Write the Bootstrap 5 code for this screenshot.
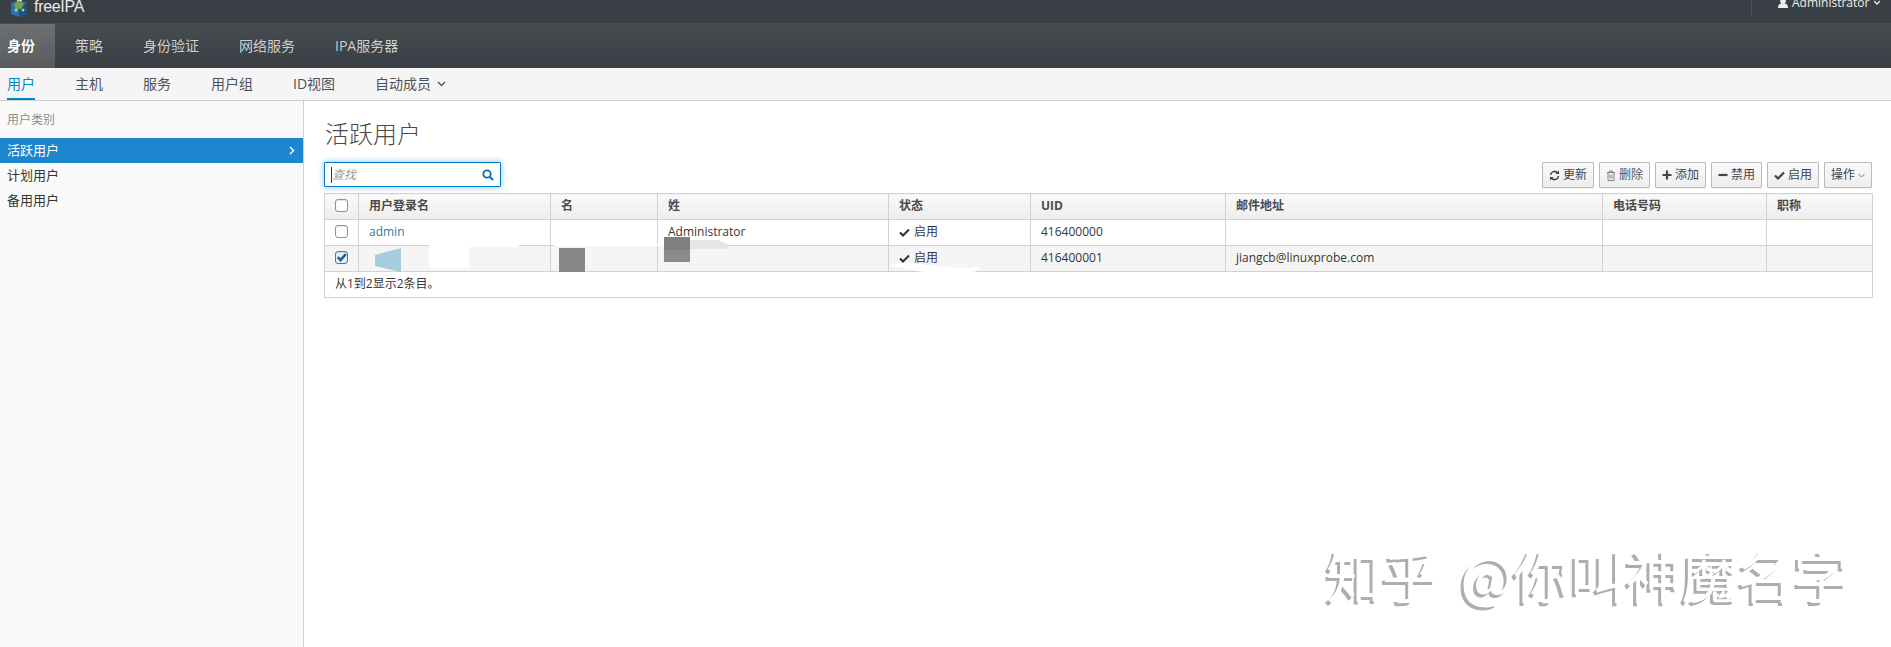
<!DOCTYPE html>
<html lang="zh-CN">
<head>
<meta charset="utf-8">
<title>freeIPA</title>
<link href="https://cdn.jsdelivr.net/npm/bootstrap@5.3.0/dist/css/bootstrap.min.css" rel="stylesheet">
<style>
html,body{height:647px;overflow:hidden}
body{font-family:"Open Sans","Noto Sans CJK SC",sans-serif;font-size:12px;color:#363636;background:#fff}
.top-strip{height:24px;background:#393f45;color:#f1f1f1;overflow:hidden;border-bottom:1px solid #474c50}
.brand-box{margin-top:-5px;padding-left:10px;gap:6px;height:24px}
.brand-text{font-family:"Liberation Sans",sans-serif;font-size:16px;letter-spacing:-.3px;color:#e8e8e8;line-height:22px}
.user-box{margin-top:-9px;height:24px;width:140px;border-left:1px solid #4d5258;padding-left:26px;gap:4px;font-size:12px;color:#eee;line-height:20px}
.primary-strip{height:44px;background:linear-gradient(#474c50,#393f45);gap:40px;padding-right:20px}
.primary-strip a{color:#d1d1d1;font-size:14px;line-height:44px;text-decoration:none;text-shadow:0 0 1px #0004}
.primary-strip a:first-child{background:linear-gradient(#6d7072,#585c5f);color:#fff;font-weight:700;width:55px;padding-left:7px;margin-right:-20px;display:block}
.tab-strip{height:33px;background:#f5f5f5;border-bottom:1px solid #d1d1d1;gap:40px;padding-left:7px}
.tab-strip a{color:#4d5258;font-size:14px;height:32px;text-decoration:none;display:flex;align-items:center;gap:6px;padding-top:1px;border-bottom:2px solid transparent}
.tab-strip a.on{color:#0088ce;border-bottom-color:#0088ce}
.main-row{height:547px}
.side-col{width:304px;flex:none;background:#fafafa;border-right:1px solid #d1d1d1;padding-top:10px}
.side-title{color:#8b8d8f;font-size:12px;line-height:17px;padding-left:7px;margin-bottom:10px}
.side-link{display:flex;justify-content:space-between;align-items:center;height:25px;padding:0 8px 0 7px;color:#363636;font-size:13px;text-decoration:none}
.side-link.on{background:#1c86cf;color:#fff}
.content-col{flex:1;padding:0 19px 0 20px;min-width:0}
.page-title{font-size:24px;font-weight:300;line-height:32px;margin:17px 0 12px 1px;color:#4a4a4a}
.tool-row{height:26px;margin-bottom:5px}
.search-box{width:177px;height:25px;border:1px solid #0079c6;box-shadow:0 0 6px #7cc3ee;background:#fff;padding:0 6px;border-radius:1px}
.search-hint{font-style:italic;color:#9c9c9c;font-size:12px;border-left:1px solid #333;line-height:16px}
.act-btn{height:26px;padding:0 6px;display:flex;align-items:center;gap:3px;font-size:12px;color:#3f4448;background:linear-gradient(#fafafa,#ededed);border:1px solid #bbb;border-radius:1px;box-shadow:0 1px 1px #0000000d;white-space:nowrap;--bs-btn-font-size:12px}
.act-btn.dim{color:#55595d}
.btn-row{gap:5px}
.grid-wrap{position:relative}
.ipa-grid{table-layout:fixed;width:1548px;border-collapse:collapse;margin:0;color:#363636}
.ipa-grid th,.ipa-grid td{height:26px;padding:0 10px;border:1px solid #d1d1d1;font-size:12px;line-height:16px;vertical-align:middle;white-space:nowrap;overflow:hidden}
.ipa-grid td{padding-bottom:2px}
.ipa-grid th{background:linear-gradient(#fafafa,#ededed);font-weight:700;color:#4a4a4a;font-size:12px;padding-bottom:2px}
.ipa-grid .shade td{background:#f5f5f5}
.ipa-grid a{color:#2a7ea8;text-decoration:none}
.ipa-grid .tick{padding-left:10px}
.ipa-grid .form-check-input{width:13px;height:13px;margin:0;display:block;border:1px solid #8f9396;border-radius:3px;background-color:#fff;box-shadow:inset 0 1px 1px #0000001a}
.ipa-grid .form-check-input:checked{border-color:#3d7ea6;background-color:#e3eff6;background-image:url("data:image/svg+xml,%3Csvg xmlns='http://www.w3.org/2000/svg' viewBox='0 0 13 13'%3E%3Cpath d='M2 6l3.500 3.500 6-7' fill='none' stroke='%23215f88' stroke-width='3'/%3E%3C/svg%3E")}
.cover{position:absolute;left:0;top:0;pointer-events:none}
.wm-text{position:absolute;left:1326px;top:534px;font-family:"Noto Sans CJK SC",sans-serif;font-size:56px;line-height:80px;white-space:nowrap;word-spacing:10px;color:#fff;text-shadow:-3px 3px 0 #aeaeae;pointer-events:none}
</style>
</head>
<body>
<div class="top-strip d-flex justify-content-between">
  <div class="brand-box d-flex align-items-center">
    <svg width="18" height="22" viewBox="0 0 18 22"><path d="M1 7l8-3 8 3v11l-8 3-8-3z" fill="#2f6fa8"/><path d="M9 10l8-3v11l-8 3z" fill="#1e4f86"/><path d="M4 9l5-6 5 5-3 5H6z" fill="#6fa64a"/><circle cx="6" cy="14" r="1.5" fill="#9ecbe8"/><circle cx="13" cy="14" r="1.5" fill="#b9d36a"/><rect x="7" y="1" width="5" height="4" fill="#cfd9c8"/></svg>
    <span class="brand-text">freeIPA</span>
  </div>
  <div class="user-box d-flex align-items-center">
    <svg width="10" height="10" viewBox="0 0 10 10"><circle cx="5" cy="3" r="2.800" fill="#eee"/><path d="M0 10c0-3.500 2-4.800 5-4.800S10 6.500 10 10z" fill="#eee"/></svg>
    <span>Administrator</span>
    <svg width="8" height="6" viewBox="0 0 8 6"><path d="M1 1l3 3 3-3" fill="none" stroke="#eee" stroke-width="1.300"/></svg>
  </div>
</div>
<nav class="primary-strip d-flex">
  <a href="#">身份</a><a href="#">策略</a><a href="#">身份验证</a><a href="#">网络服务</a><a href="#">IPA服务器</a>
</nav>
<nav class="tab-strip d-flex">
  <a href="#" class="on">用户</a><a href="#">主机</a><a href="#">服务</a><a href="#">用户组</a><a href="#">ID视图</a>
  <a href="#">自动成员 <svg width="9" height="6" viewBox="0 0 9 6"><path d="M1 1l3.500 3.500L8 1" fill="none" stroke="#4d5258" stroke-width="1.300"/></svg></a>
</nav>
<div class="main-row d-flex">
  <aside class="side-col">
    <div class="side-title">用户类别</div>
    <a href="#" class="side-link on">活跃用户 <svg width="6" height="9" viewBox="0 0 6 9"><path d="M1 1l3.500 3.500L1 8" fill="none" stroke="#fff" stroke-width="1.400"/></svg></a>
    <a href="#" class="side-link">计划用户</a>
    <a href="#" class="side-link">备用用户</a>
  </aside>
  <main class="content-col">
    <h1 class="page-title">活跃用户</h1>
    <div class="tool-row d-flex justify-content-between">
      <div class="search-box d-flex justify-content-between align-items-center">
        <span class="search-hint">查找</span>
        <svg width="12" height="12" viewBox="0 0 12 12"><circle cx="5" cy="5" r="3.700" fill="none" stroke="#0d6fa8" stroke-width="1.800"/><path d="M7.800 7.800L11 11" stroke="#0d6fa8" stroke-width="2"/></svg>
      </div>
      <div class="d-flex btn-row">
        <button class="btn act-btn"><svg width="11" height="11" viewBox="0 0 11 11"><path d="M1.500 5A4 4 0 0 1 8.500 2.800M9.500 6A4 4 0 0 1 2.500 8.200" fill="none" stroke="#3f4448" stroke-width="1.500"/><path d="M10 .5v3.500H6.500zM1 10.500V7h3.500z" fill="#3f4448"/></svg>更新</button>
        <button class="btn act-btn dim"><svg width="10" height="11" viewBox="0 0 10 11"><path d="M1 2.500h8M3.500 2.500V1h3v1.500M2 2.500v8h6v-8M4 4.500v4M6 4.500v4" fill="none" stroke="#777" stroke-width=".9"/></svg>删除</button>
        <button class="btn act-btn"><svg width="10" height="10" viewBox="0 0 10 10"><path d="M5 .5v9M.5 5h9" stroke="#3f4448" stroke-width="2.200"/></svg>添加</button>
        <button class="btn act-btn"><svg width="10" height="10" viewBox="0 0 10 10"><path d="M.5 5h9" stroke="#3f4448" stroke-width="2.200"/></svg>禁用</button>
        <button class="btn act-btn"><svg width="11" height="9" viewBox="0 0 11 9"><path d="M1 4.500l3 3L10 1.500" fill="none" stroke="#3f4448" stroke-width="2.200"/></svg>启用</button>
        <button class="btn act-btn">操作 <svg width="7" height="5" viewBox="0 0 7 5"><path d="M.5 1l3 3 3-3" fill="none" stroke="#777" stroke-width=".9"/></svg></button>
      </div>
    </div>
    <div class="grid-wrap">
      <table class="ipa-grid">
        <colgroup><col style="width:34px"><col style="width:192px"><col style="width:107px"><col style="width:231px"><col style="width:142px"><col style="width:195px"><col style="width:377px"><col style="width:164px"><col style="width:106px"></colgroup>
        <thead><tr><th class="tick"><input class="form-check-input" type="checkbox" aria-label="全选"></th><th>用户登录名</th><th>名</th><th>姓</th><th>状态</th><th>UID</th><th>邮件地址</th><th>电话号码</th><th>职称</th></tr></thead>
        <tbody>
          <tr><td class="tick"><input class="form-check-input" type="checkbox" aria-label="admin"></td><td><a href="#">admin</a></td><td></td><td>Administrator</td><td><svg class="me-1" width="11" height="9" viewBox="0 0 11 9"><path d="M1 4.500l3 3L10 1.500" fill="none" stroke="#333" stroke-width="2.100"/></svg>启用</td><td>416400000</td><td></td><td></td><td></td></tr>
          <tr class="shade"><td class="tick"><input class="form-check-input" type="checkbox" checked aria-label="用户"></td><td></td><td></td><td></td><td><svg class="me-1" width="11" height="9" viewBox="0 0 11 9"><path d="M1 4.500l3 3L10 1.500" fill="none" stroke="#333" stroke-width="2.100"/></svg>启用</td><td>416400001</td><td>jiangcb@linuxprobe.com</td><td></td><td></td></tr>
          <tr><td colspan="9" class="tick">从1到2显示2条目。</td></tr>
        </tbody>
      </table>
      <svg class="cover" width="800" height="90" viewBox="0 0 800 90">
        <path d="M105 51h90v3h-50v21h-40zM230 51h110v2H230z" fill="#fff"/>
        <path d="M51 62l26-7v24l-26-6z" fill="#a6cce0"/>
        <path d="M235 55h26v24h-26z" fill="#888"/>
        <path d="M366 47h28l10 4v5h-38z" fill="#e6e6e6"/>
        <path d="M340 44h26v13h-26z" fill="#7f7f7f"/>
        <path d="M340 57h26v12h-26z" fill="#8b8b8b"/>
        <path d="M565 72c25-6 55 6 90 2l-5 6c-30 4-60-2-85-8z" fill="#fff"/>
      </svg>
    </div>
  </main>
</div>
<div class="wm-text">知乎 @你叫神魔名字</div>
<script src="https://cdn.jsdelivr.net/npm/bootstrap@5.3.0/dist/js/bootstrap.bundle.min.js"></script>
</body>
</html>
